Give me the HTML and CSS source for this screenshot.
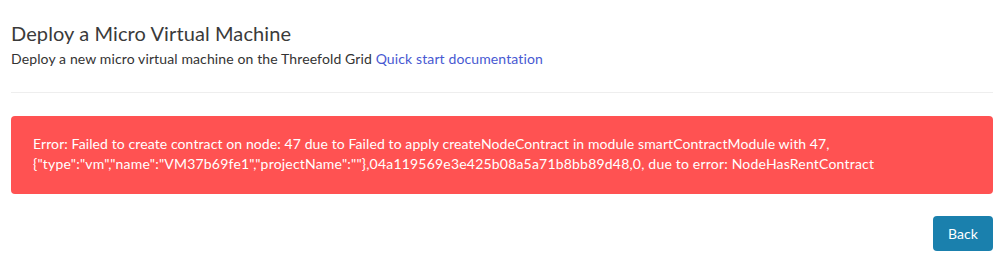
FILE: index.html
```html
<!DOCTYPE html>
<html lang="en">
<head>
<meta charset="utf-8">
<title>Deploy a Micro Virtual Machine</title>
<link rel="stylesheet" href="styles.css">
</head>
<body>
<div class="page">
  <header class="head">
    <h1 class="title">Deploy a Micro Virtual Machine</h1>
    <p class="subtitle">Deploy a new micro virtual machine on the Threefold Grid <a class="link" href="#">Quick start documentation</a></p>
  </header>
  <hr class="divider">
  <div class="alert">Error: Failed to create contract on node: 47 due to Failed to apply createNodeContract in module smartContractModule with 47, <span class="payload">{"type":"vm","name":"VM37b69fe1","projectName":""},04a119569e3e425b08a5a71b8bb89d48,0, due to error: NodeHasRentContract</span></div>
  <div class="actions">
    <button class="btn">Back</button>
  </div>
</div>
</body>
</html>
```
FILE: styles.css
```css
html, body {
  margin: 0;
  padding: 0;
  background: #ffffff;
}
body {
  font-family: Lato, "Open Sans", sans-serif;
  color: #333333;
}
.page {
  padding: 21px 14px 0 11px;
}
.head {
  display: flex;
  flex-direction: column;
  gap: 3px;
}
.title {
  margin: 0;
  font-size: 20px;
  font-weight: 400;
  line-height: 25px;
  color: #3a3a3a;
  letter-spacing: 0.1px;
}
.subtitle {
  margin: 0;
  font-size: 14px;
  line-height: 20px;
  color: #333333;
  letter-spacing: 0.12px;
}
.link {
  color: #4759d2;
  text-decoration: none;
}
.divider {
  border: 0;
  border-top: 1px solid #eeeeee;
  margin: 23px 0 23px;
}
.alert {
  background: #ff5252;
  color: #ffffff;
  border-radius: 4px;
  font-size: 14px;
  line-height: 20px;
  letter-spacing: 0.1px;
  padding: 18px 22px 20px;
}
.payload {
  letter-spacing: 0.2px;
}
.actions {
  display: flex;
  justify-content: flex-end;
  margin-top: 22px;
}
.btn {
  font-family: Lato, "Open Sans", sans-serif;
  background: #1a80ad;
  color: #ffffff;
  border: 0;
  border-radius: 4px;
  font-size: 14px;
  letter-spacing: 0.1px;
  width: 60px;
  height: 35px;
  padding: 0;
}
```
